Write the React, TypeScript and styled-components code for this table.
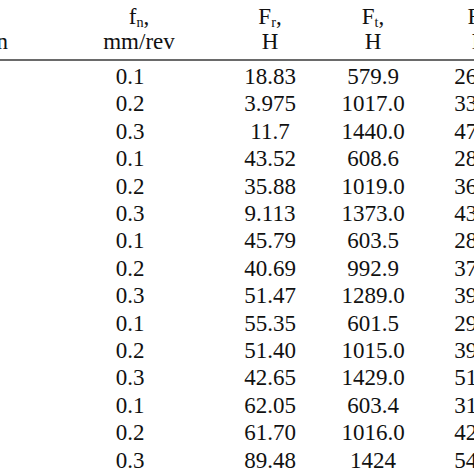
import React from 'react';
import styled, { createGlobalStyle } from 'styled-components';

const GlobalStyle = createGlobalStyle`
  html, body {
    margin: 0;
    padding: 0;
    background: #ffffff;
  }
`;

type Row = { f: string; fr: string; ft: string; fa: string };

const rows: Row[] = [
  { f: '0.1', fr: '18.83', ft: '579.9', fa: '264.1' },
  { f: '0.2', fr: '3.975', ft: '1017.0', fa: '335.2' },
  { f: '0.3', fr: '11.7', ft: '1440.0', fa: '471.6' },
  { f: '0.1', fr: '43.52', ft: '608.6', fa: '283.7' },
  { f: '0.2', fr: '35.88', ft: '1019.0', fa: '364.5' },
  { f: '0.3', fr: '9.113', ft: '1373.0', fa: '433.8' },
  { f: '0.1', fr: '45.79', ft: '603.5', fa: '286.4' },
  { f: '0.2', fr: '40.69', ft: '992.9', fa: '372.1' },
  { f: '0.3', fr: '51.47', ft: '1289.0', fa: '396.5' },
  { f: '0.1', fr: '55.35', ft: '601.5', fa: '295.3' },
  { f: '0.2', fr: '51.40', ft: '1015.0', fa: '398.7' },
  { f: '0.3', fr: '42.65', ft: '1429.0', fa: '512.4' },
  { f: '0.1', fr: '62.05', ft: '603.4', fa: '314.9' },
  { f: '0.2', fr: '61.70', ft: '1016.0', fa: '427.6' },
  { f: '0.3', fr: '89.48', ft: '1424', fa: '545.2' },
];

export default function App() {
  return (
    <>
      <GlobalStyle />
      <Page>
        <Table>
          <HeadCell>
            V<Sub>c</Sub>,<br />m/min
          </HeadCell>
          <HeadCell $shift={9}>
            f<Sub>n</Sub>,<br />mm/rev
          </HeadCell>
          <HeadCell>
            F<Sub>r</Sub>,<br />Н
          </HeadCell>
          <HeadCell>
            F<Sub>t</Sub>,<br />Н
          </HeadCell>
          <HeadCell>
            F<Sub>a</Sub>,<br />Н
          </HeadCell>
          <Rule />
          {rows.map((r, i) => (
            <React.Fragment key={i}>
              <Cell />
              <Cell>{r.f}</Cell>
              <Cell>{r.fr}</Cell>
              <Cell>{r.ft}</Cell>
              <Cell>{r.fa}</Cell>
            </React.Fragment>
          ))}
        </Table>
      </Page>
    </>
  );
}

const Page = styled.div`
  width: 474px;
  height: 474px;
  overflow: hidden;
  background: #ffffff;
  color: #111111;
  font-family: 'Liberation Serif', 'Times New Roman', serif;
  font-size: 23px;
`;

const Table = styled.div`
  display: grid;
  grid-template-columns: 140px 164px 116px 90px 124px;
  margin-left: -92px;
  padding-top: 4px;
  width: 634px;
`;

const HeadCell = styled.div<{ $shift?: number }>`
  text-align: center;
  line-height: 25px;
  white-space: nowrap;
  padding-left: ${(p) => (p.$shift ? p.$shift * 2 : 0)}px;
`;

const Sub = styled.sub`
  font-size: 0.62em;
  vertical-align: -0.2em;
  line-height: 0;
`;

const Rule = styled.div`
  grid-column: 1 / -1;
  height: 2px;
  background: #6a6a6a;
  margin: 5px 0 2px;
`;

const Cell = styled.div`
  text-align: center;
  line-height: 27.4px;
  white-space: nowrap;
`;
